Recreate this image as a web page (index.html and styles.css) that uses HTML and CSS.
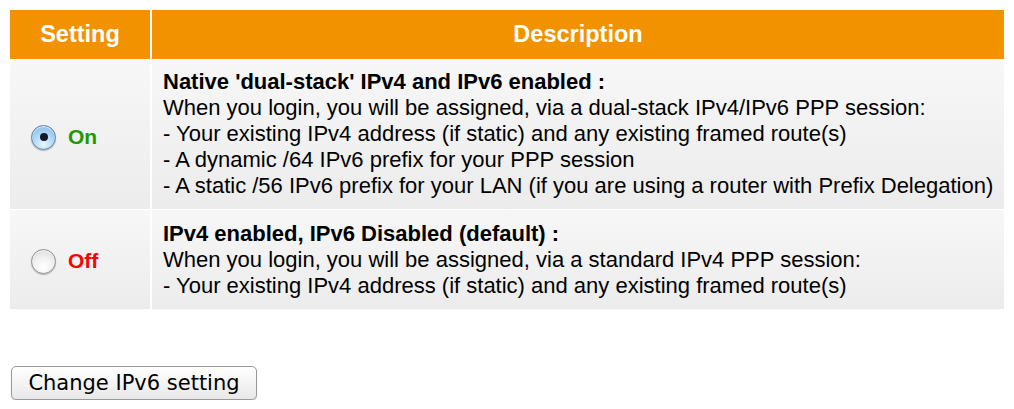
FILE: index.html
```html
<!DOCTYPE html>
<html>
<head>
<meta charset="utf-8">
<link rel="stylesheet" href="styles.css">
</head>
<body>
<form class="ipv6-form">
  <table class="settings">
    <thead>
      <tr>
        <th class="col-setting">Setting</th>
        <th class="col-desc">Description</th>
      </tr>
    </thead>
    <tbody>
      <tr class="row-on">
        <td class="setting-cell">
          <label class="opt">
            <span class="radio radio-checked"><span class="dot"></span></span>
            <span class="opt-label on">On</span>
          </label>
        </td>
        <td class="desc-cell">
          <b>Native 'dual-stack' IPv4 and IPv6 enabled :</b><br>
          When you login, you will be assigned, via a dual-stack IPv4/IPv6 PPP session:<br>
          - Your existing IPv4 address (if static) and any existing framed route(s)<br>
          - A dynamic /64 IPv6 prefix for your PPP session<br>
          - A static /56 IPv6 prefix for your LAN (if you are using a router with Prefix Delegation)
        </td>
      </tr>
      <tr class="row-off">
        <td class="setting-cell">
          <label class="opt">
            <span class="radio"></span>
            <span class="opt-label off">Off</span>
          </label>
        </td>
        <td class="desc-cell">
          <b>IPv4 enabled, IPv6 Disabled (default) :</b><br>
          When you login, you will be assigned, via a standard IPv4 PPP session:<br>
          - Your existing IPv4 address (if static) and any existing framed route(s)
        </td>
      </tr>
    </tbody>
  </table>
  <div class="actions">
    <button type="button" class="btn">Change IPv6 setting</button>
  </div>
</form>
</body>
</html>
```

FILE: styles.css
```css
html, body {
  margin: 0;
  padding: 0;
  background: #ffffff;
}
body {
  margin: 8px;
  font-family: "Liberation Sans", Arial, Helvetica, sans-serif;
  color: #000;
}
.settings {
  width: 100%;
  border-collapse: separate;
  border-spacing: 2px 1px;
  margin-top: 1px;
}
.settings th {
  background: #f39200;
  color: #ffffff;
  font-size: 23.5px;
  font-weight: bold;
  height: 49px;
  padding: 0;
  text-align: center;
  vertical-align: middle;
}
.col-setting {
  width: 140px;
}
.settings td {
  background: linear-gradient(#f7f7f7, #ececec);
  vertical-align: middle;
}
.desc-cell {
  font-size: 22px;
  line-height: 26px;
  padding: 9px 8px 10px 11px;
}
.row-off .desc-cell {
  padding-top: 11px;
  padding-bottom: 10px;
}
.setting-cell {
  padding: 0 0 0 21px;
}
.opt {
  display: flex;
  align-items: center;
  gap: 12px;
  margin-top: 3px;
}
.row-on .opt {
  margin-top: 5px;
}
.radio {
  width: 25px;
  height: 25px;
  border-radius: 50%;
  box-sizing: border-box;
  border: 1px solid #8e8e8e;
  background: radial-gradient(circle at 50% 75%, #ffffff 0%, #f2f2f2 45%, #d6d6d6 100%);
  box-shadow: 0 1px 1px rgba(0,0,0,0.25), inset 0 1px 1px rgba(255,255,255,0.9);
  display: flex;
  align-items: center;
  justify-content: center;
  flex: none;
}
.radio-checked {
  border-color: #5d7fa8;
  background: radial-gradient(circle at 50% 80%, #e8f6ff 0%, #b7dcf7 40%, #7fb3e3 100%);
}
.dot {
  width: 8px;
  height: 8px;
  border-radius: 50%;
  background: #111a26;
}
.opt-label {
  font-size: 21px;
  font-weight: bold;
}
.on { color: #1c9a00; }
.off { color: #ff0000; }
.actions {
  margin-top: 56px;
  padding-left: 3px;
}
.btn {
  font-family: "DejaVu Sans", "Lucida Grande", sans-serif;
  font-size: 21px;
  color: #000;
  height: 34px;
  width: 246px;
  padding: 0;
  border: 1px solid #999;
  border-radius: 5px;
  background: linear-gradient(#ffffff, #f4f4f4 50%, #e8e8e8);
  box-shadow: 0 1px 1px rgba(0,0,0,0.2);
}
```
